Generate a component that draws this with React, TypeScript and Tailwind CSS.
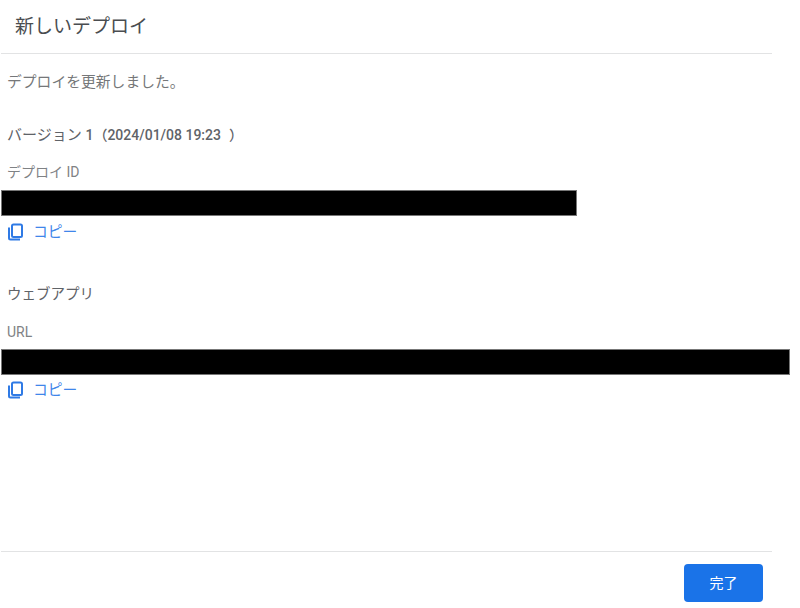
import React from 'react';

const CopyIcon = () => (
  <svg width="20" height="20" viewBox="0 0 20 20" fill="none" stroke="#2f7ae5" strokeWidth="2" className="shrink-0">
    <rect x="7" y="2.5" width="10" height="12.5" rx="1.5" />
    <path d="M4 5.5V16C4 16.8 4.7 17.5 5.5 17.5H15" />
  </svg>
);

const CopyLink = () => (
  <div className="flex items-center h-5 pl-[5px] gap-[8px] text-[14.8px] text-[#3f86ea]">
    <CopyIcon />
    <span>コピー</span>
  </div>
);

const Redacted = ({ width }: { width: string }) => (
  <div className={`${width} h-[26px] bg-black border border-[#777] ml-px`} />
);

const App = () => {
  return (
    <div className="w-[800px] h-[608px] bg-white flex flex-col font-['Roboto','Noto_Sans_CJK_JP',sans-serif] overflow-hidden">
      {/* Title */}
      <div className="w-[771px] h-[54px] ml-px border-b border-[#e2e3e4] pl-[14px] pt-[13px] text-[19px] leading-[28px] text-[#4a4d50] shrink-0">
        新しいデプロイ
      </div>

      {/* Body */}
      <div className="flex-1 flex flex-col">
        <p className="mt-[18px] ml-[7px] text-[14.8px] leading-[20px] text-[#757779]">デプロイを更新しました。</p>

        <p className="mt-[33px] ml-[7px] text-[15px] leading-[20px] text-[#5f6368]">
          バージョン <span className="font-medium text-[14px]">1<span>（</span>2024/01/08 19:23<span className="ml-[8px]">）</span></span>
        </p>
        <p className="mt-[17px] ml-[7px] text-[14px] leading-[20px] text-[#7f8285]">デプロイ ID</p>
        <div className="mt-[8px]">
          <Redacted width="w-[576px]" />
        </div>
        <div className="mt-[6px]">
          <CopyLink />
        </div>

        <p className="mt-[43px] ml-[7px] text-[14.5px] leading-[20px] text-[#5f6368]">ウェブアプリ</p>
        <p className="mt-[17px] ml-[7px] text-[14px] leading-[20px] text-[#7f8285]">URL</p>
        <div className="mt-[7px]">
          <Redacted width="w-[789px]" />
        </div>
        <div className="mt-[5px]">
          <CopyLink />
        </div>
      </div>

      {/* Footer */}
      <div className="w-[771px] h-[57px] ml-px border-t border-[#e2e3e4] flex justify-end items-start pt-[12px] pr-[9px] shrink-0">
        <button className="w-[79px] h-[38px] rounded-[4px] bg-[#1a73e8] text-white text-[14px]">完了</button>
      </div>
    </div>
  );
};

export default App;
